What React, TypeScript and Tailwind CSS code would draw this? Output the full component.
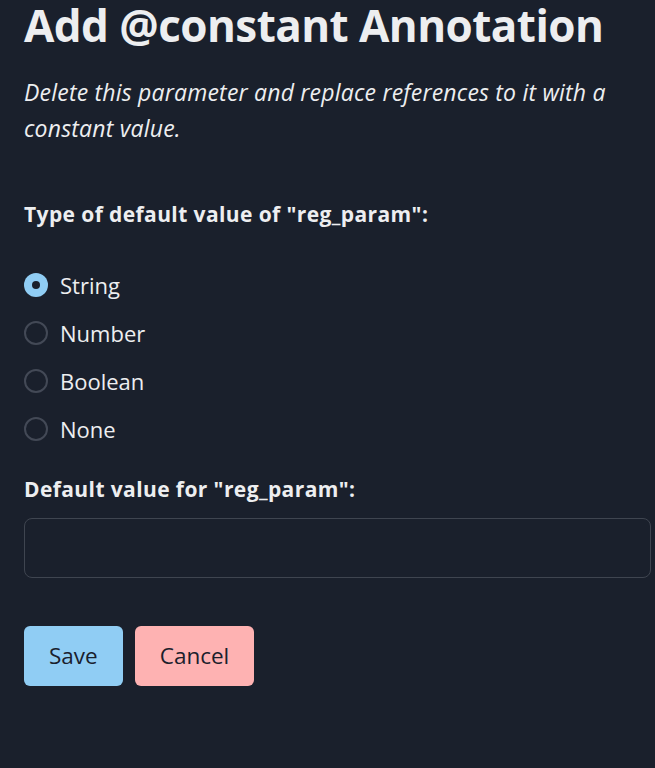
import React, { useState } from 'react';

const types = ['String', 'Number', 'Boolean', 'None'];

export default function App() {
  const [type, setType] = useState('String');
  const [value, setValue] = useState('');

  return (
    <div
      className="min-h-screen bg-[#1a202c] text-[#edeef0] pl-6 pr-1 overflow-hidden"
      style={{ fontFamily: '"Open Sans", "Noto Sans", sans-serif' }}
    >
      <h1 className="text-[44px] font-bold leading-[50px] tracking-[-0.55px] whitespace-nowrap">Add @constant Annotation</h1>

      <p className="mt-[24px] text-[23px] italic leading-[36px] tracking-[0.2px]">
        Delete this parameter and replace references to it with a
        <br />
        constant value.
      </p>

      <form className="mt-[54px]" onSubmit={(e) => e.preventDefault()}>
        <label className="block text-[21px] font-bold leading-[28px] tracking-[0.4px]">Type of default value of "reg_param":</label>

        <div className="mt-[43px] flex flex-col gap-[20px]">
          {types.map((t) => (
            <label key={t} className="flex items-center gap-3 h-[28px] text-[22px] cursor-pointer">
              <input
                type="radio"
                name="type"
                className="sr-only"
                checked={type === t}
                onChange={() => setType(t)}
              />
              {type === t ? (
                <span className="w-6 h-6 rounded-full bg-[#90cdf4] flex items-center justify-center">
                  <span className="w-2 h-2 rounded-full bg-[#1a202c]" />
                </span>
              ) : (
                <span className="w-6 h-6 rounded-full border-2 border-[#434956]" />
              )}
              <span>{t}</span>
            </label>
          ))}
        </div>

        <label className="block mt-[32px] text-[21px] font-bold leading-[28px] tracking-[0.4px]">Default value for "reg_param":</label>
        <input
          value={value}
          onChange={(e) => setValue(e.target.value)}
          className="mt-[15px] block w-full h-[60px] rounded-lg border border-[#3f4550] bg-transparent px-5 text-[20px] outline-none"
        />

        <div className="mt-[48px] flex gap-3">
          <button className="h-[60px] px-[25px] rounded-md bg-[#90cdf4] text-[#1a202c] text-[22.5px] font-medium">Save</button>
          <button className="h-[60px] px-[25px] rounded-md bg-[#feb2b2] text-[#1a202c] text-[22.5px] font-medium">Cancel</button>
        </div>
      </form>
    </div>
  );
}
